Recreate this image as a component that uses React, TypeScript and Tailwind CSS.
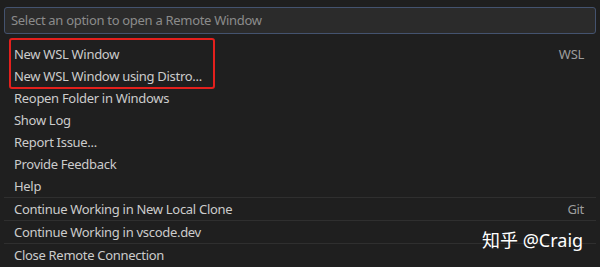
import React from "react";

const rows: { label: string; detail?: string; sep?: boolean }[] = [
  { label: "New WSL Window", detail: "WSL" },
  { label: "New WSL Window using Distro..." },
  { label: "Reopen Folder in Windows" },
  { label: "Show Log" },
  { label: "Report Issue..." },
  { label: "Provide Feedback" },
  { label: "Help" },
  { label: "Continue Working in New Local Clone", detail: "Git", sep: true },
  { label: "Continue Working in vscode.dev", sep: true },
  { label: "Close Remote Connection", sep: true },
];

export default function App() {
  return (
    <div
      className="relative w-[600px] h-[267px] overflow-hidden bg-[#1f1f1f] px-[4px] pt-[7px] tracking-[-0.3px]"
      style={{ fontFamily: '"Noto Sans", "Open Sans", sans-serif' }}
    >
      <div className="h-[27px] rounded-[3px] border border-[#44536f] bg-[#2b2b2b] flex items-center px-[6px] pt-[1px] text-[13px] text-[#8b8b8b]">
        Select an option to open a Remote Window
      </div>
      <div className="mt-[9px] flex flex-col">
        {rows.map((r) => (
          <div
            key={r.label}
            className={
              r.sep
                ? "h-[23px] border-t border-[#2f2f2f] flex items-center justify-between pl-[10px] pr-[12px] pt-[2px] text-[13px] text-[#cccccc]"
                : "h-[22px] flex items-center justify-between pl-[10px] pr-[12px] pt-[2px] text-[13px] text-[#cccccc]"
            }
          >
            <span>{r.label}</span>
            {r.detail && <span className="text-[#9d9d9d]">{r.detail}</span>}
          </div>
        ))}
      </div>
      <div className="absolute left-[9px] top-[38px] w-[206px] h-[51px] rounded-[3px] border-2 border-[#e3201d]" />
      <div
        className="absolute left-[482px] top-[229px] text-[18px] leading-[22px] text-white tracking-normal"
        style={{ fontFamily: '"Noto Sans", "Noto Sans CJK SC", sans-serif' }}
      >
        知乎 @Craig
      </div>
    </div>
  );
}
